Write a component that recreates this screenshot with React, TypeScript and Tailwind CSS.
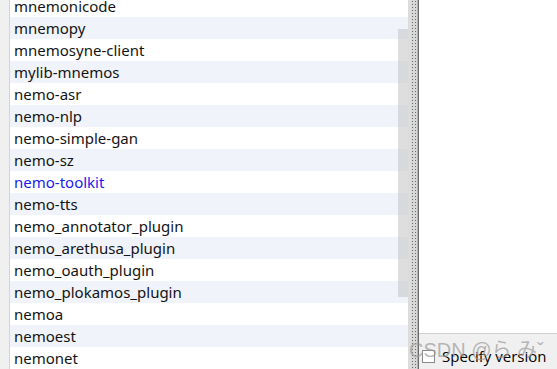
import React from "react";

const items = [
  "mnemonicode",
  "mnemopy",
  "mnemosyne-client",
  "mylib-mnemos",
  "nemo-asr",
  "nemo-nlp",
  "nemo-simple-gan",
  "nemo-sz",
  "nemo-toolkit",
  "nemo-tts",
  "nemo_annotator_plugin",
  "nemo_arethusa_plugin",
  "nemo_oauth_plugin",
  "nemo_plokamos_plugin",
  "nemoa",
  "nemoest",
  "nemonet",
];

export default function App() {
  return (
    <div
      className="flex w-[557px] h-[369px] overflow-hidden bg-white"
      style={{ fontFamily: '"Noto Sans", "Open Sans", sans-serif' }}
    >
      <div className="w-[10px] shrink-0 bg-[#f0f0f0] border-r border-[#d4d4d4]" />
      <div className="relative w-[398px] shrink-0 overflow-hidden">
        <div className="mt-[-5px] flex flex-col">
          {items.map((name, i) => (
            <div
              key={name}
              className={
                "h-[22px] shrink-0 pl-[4px] pt-[1px] flex items-center text-[15px] leading-none " +
                (i % 2 === 1 ? "bg-[#f0f3f9] " : "bg-white ") +
                (name === "nemo-toolkit" ? "text-[#1a1aee]" : "text-[#141414]")
              }
            >
              {name}
            </div>
          ))}
        </div>
        <div className="absolute left-[388px] top-[29px] w-[10px] h-[268px] bg-[#c8c8c8]/60" />
      </div>
      <div className="w-[3px] shrink-0 bg-[#dcdcdc]" />
      <div className="w-[6px] shrink-0 bg-[#d8d8d8] bg-[radial-gradient(circle,#6a6a6a_0.8px,transparent_1px)] bg-[length:3px_3px]" />
      <div className="w-[1px] shrink-0 bg-[#b0b0b0]" />
      <div className="w-[1px] shrink-0 bg-[#6a6a6a]" />
      <div className="flex-1 flex flex-col">
        <div className="flex-1 bg-white" />
        <div className="relative h-[36px] bg-[#f0f0f0] border-t border-[#d0d0d0] flex items-center pl-[3px]">
          <div className="w-[13px] h-[13px] border border-[#8a8a8a] bg-white mt-[9px]" />
          <span
            className="ml-[7px] mt-[10px] text-[15px] leading-none text-black"
            style={{ fontFamily: '"Open Sans", "Noto Sans", sans-serif' }}
          >
            Specify version
          </span>
          <span
            className="absolute left-[-10px] top-[6px] text-[20px] leading-none text-[#9a9a9a]/70 whitespace-nowrap"
            style={{ fontFamily: '"Liberation Sans", "Noto Sans CJK JP", sans-serif' }}
          >
            CSDN @ら みˇ
          </span>
        </div>
      </div>
    </div>
  );
}
